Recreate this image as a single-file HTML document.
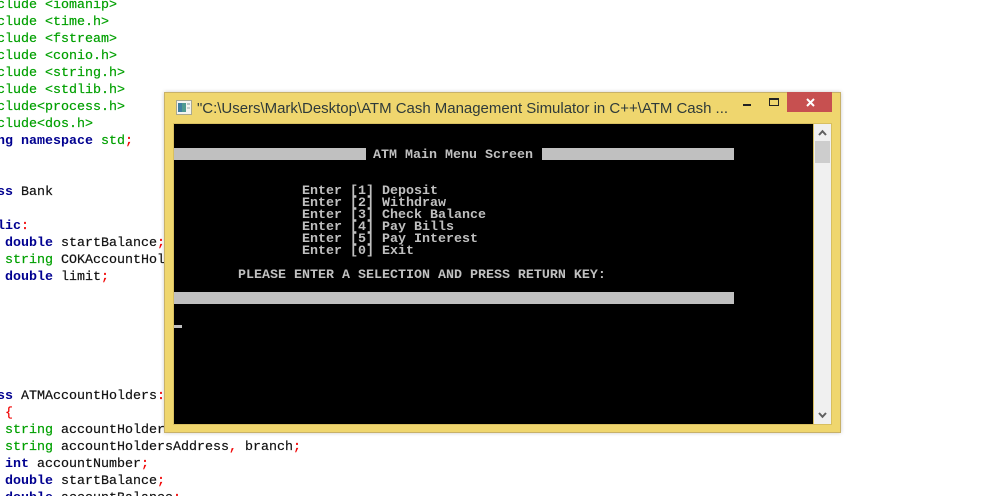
<!DOCTYPE html>
<html><head><meta charset="utf-8">
<style>
html,body{margin:0;padding:0;background:#fff;}
#p{position:relative;width:985px;height:496px;overflow:hidden;background:#fff;}
.c{position:absolute;white-space:pre;font:13.33px/17px "Liberation Mono",monospace;color:#111;left:-27px;margin-top:1px;-webkit-text-stroke:0.2px currentColor;}
.g{color:#00a000}.r{color:#f00000}.b{color:#000090;font-weight:bold;-webkit-text-stroke:0}
#w{position:absolute;left:164px;top:92px;width:675px;height:339px;background:#efd66e;border:1px solid #c8b168;box-shadow:0 0 4px rgba(0,0,0,.2);}
#cl{position:absolute;left:174px;top:124px;width:640px;height:300px;background:#000;box-shadow:0 0 0 1px #d8bf60;overflow:hidden;}
.t{position:absolute;white-space:pre;font:bold 13.33px/12px "Liberation Mono",monospace;color:#c0c0c0;left:0;margin-top:2px;}
.bar{position:absolute;background:#c0c0c0;height:12px;}
#sb{position:absolute;left:814px;top:124px;width:17px;height:300px;background:#f0f0f0;box-shadow:0 0 0 1px #d8bf60;}
#th{position:absolute;left:1px;top:17px;width:15px;height:22px;background:#cdcdcd;}
#ti{position:absolute;left:197px;top:99px;font:15px/20px "Liberation Sans",sans-serif;color:#2e3a3a;white-space:pre;letter-spacing:-0.02px;}
</style></head><body><div id="p">
<div class="c g" style="top:-4px">#include &lt;iomanip&gt;</div>
<div class="c g" style="top:13px">#include &lt;time.h&gt;</div>
<div class="c g" style="top:30px">#include &lt;fstream&gt;</div>
<div class="c g" style="top:47px">#include &lt;conio.h&gt;</div>
<div class="c g" style="top:64px">#include &lt;string.h&gt;</div>
<div class="c g" style="top:81px">#include &lt;stdlib.h&gt;</div>
<div class="c g" style="top:98px">#include&lt;process.h&gt;</div>
<div class="c g" style="top:115px">#include&lt;dos.h&gt;</div>
<div class="c" style="top:132px"><span class="b">using namespace</span> <span class="g">std</span><span class="r">;</span></div>
<div class="c" style="top:183px"><span class="b">class</span> Bank</div>
<div class="c" style="top:217px"><span class="b">public</span><span class="r">:</span></div>
<div class="c" style="top:234px">    <span class="b">double</span> startBalance<span class="r">;</span></div>
<div class="c" style="top:251px">    <span class="g">string</span> COKAccountHolder</div>
<div class="c" style="top:268px">    <span class="b">double</span> limit<span class="r">;</span></div>
<div class="c" style="top:387px"><span class="b">class</span> ATMAccountHolders<span class="r">:</span></div>
<div class="c" style="top:404px">    <span class="r">{</span></div>
<div class="c" style="top:421px">    <span class="g">string</span> accountHolder</div>
<div class="c" style="top:438px">    <span class="g">string</span> accountHoldersAddress<span class="r">,</span> branch<span class="r">;</span></div>
<div class="c" style="top:455px">    <span class="b">int</span> accountNumber<span class="r">;</span></div>
<div class="c" style="top:472px">    <span class="b">double</span> startBalance<span class="r">;</span></div>
<div class="c" style="top:489px">    <span class="b">double</span> accountBalance<span class="r">;</span></div>

<div id="w"></div>
<svg style="position:absolute;left:176px;top:100px" width="16" height="15" viewBox="0 0 16 15">
<rect x="0.5" y="0.5" width="15" height="14" fill="#f4f4f0" stroke="#a8a890"/>
<rect x="2" y="3" width="8" height="9" fill="#4f9a90"/>
<rect x="2" y="3" width="4" height="9" fill="#3f7fa0"/>
<rect x="11" y="3" width="3" height="2" fill="#b8c4c4"/>
<rect x="11" y="7" width="3" height="2" fill="#c8d0d0"/>
</svg>
<div id="ti">"C:\Users\Mark\Desktop\ATM Cash Management Simulator in C++\ATM Cash ...</div>
<div style="position:absolute;left:743px;top:104px;width:8px;height:2px;background:#222"></div>
<div style="position:absolute;left:769px;top:98px;width:8px;height:5px;border:1px solid #222;border-top-width:2px"></div>
<div style="position:absolute;left:787px;top:92px;width:45px;height:20px;background:#c75050"></div>
<svg style="position:absolute;left:806px;top:98px" width="10" height="10" viewBox="0 0 10 10"><path d="M1 1L8 8M8 1L1 8" stroke="#fff" stroke-width="2" fill="none"/></svg>

<div id="cl">
<div class="bar" style="left:0;top:24px;width:192px"></div>
<div class="t" style="top:24px;left:199px">ATM Main Menu Screen</div>
<div class="bar" style="left:368px;top:24px;width:192px"></div>
<div class="t" style="top:60px;left:128px">Enter [1] Deposit</div>
<div class="t" style="top:72px;left:128px">Enter [2] Withdraw</div>
<div class="t" style="top:84px;left:128px">Enter [3] Check Balance</div>
<div class="t" style="top:96px;left:128px">Enter [4] Pay Bills</div>
<div class="t" style="top:108px;left:128px">Enter [5] Pay Interest</div>
<div class="t" style="top:120px;left:128px">Enter [0] Exit</div>
<div class="t" style="top:144px;left:64px">PLEASE ENTER A SELECTION AND PRESS RETURN KEY:</div>
<div class="bar" style="left:0;top:168px;width:560px"></div>
<div class="bar" style="left:0;top:201px;width:8px;height:3px"></div>
</div>

<div id="sb"><div id="th"></div>
<svg style="position:absolute;left:4px;top:5px" width="9" height="7" viewBox="0 0 9 7"><path d="M1 6L4.5 2.2L8 6" stroke="#606060" stroke-width="2" fill="none"/></svg>
<svg style="position:absolute;left:4px;top:288px" width="9" height="7" viewBox="0 0 9 7"><path d="M1 1L4.5 4.8L8 1" stroke="#606060" stroke-width="2" fill="none"/></svg>
</div>
</div></body></html>
